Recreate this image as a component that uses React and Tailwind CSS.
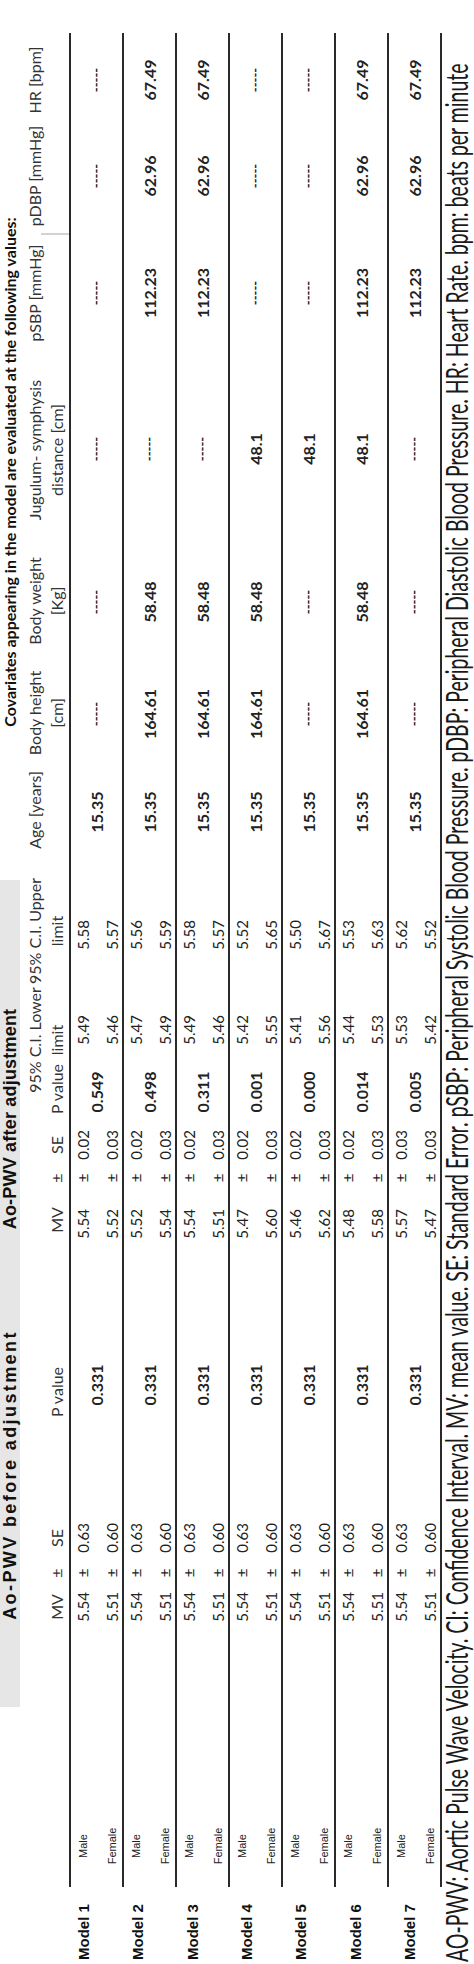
const rows = [
  { n: "1", lab: "pt-[5px]", mv: ["5.54", "5.52"], se: ["0.02", "0.03"], p: "0.549", lo: ["5.49", "5.46"], up: ["5.58", "5.57"], cov: ["15.35", "-----", "-----", "-----", "-----", "-----", "-----"] },
  { n: "2", lab: "pt-[6px]", mv: ["5.52", "5.54"], se: ["0.02", "0.03"], p: "0.498", lo: ["5.47", "5.49"], up: ["5.56", "5.59"], cov: ["15.35", "164.61", "58.48", "-----", "112.23", "62.96", "67.49"] },
  { n: "3", lab: "pt-[8px]", mv: ["5.54", "5.51"], se: ["0.02", "0.03"], p: "0.311", lo: ["5.49", "5.46"], up: ["5.58", "5.57"], cov: ["15.35", "164.61", "58.48", "-----", "112.23", "62.96", "67.49"] },
  { n: "4", lab: "pt-[9px]", mv: ["5.47", "5.60"], se: ["0.02", "0.03"], p: "0.001", lo: ["5.42", "5.55"], up: ["5.52", "5.65"], cov: ["15.35", "164.61", "58.48", "48.1", "-----", "-----", "-----"] },
  { n: "5", lab: "pt-[10px]", mv: ["5.46", "5.62"], se: ["0.02", "0.03"], p: "0.000", lo: ["5.41", "5.56"], up: ["5.50", "5.67"], cov: ["15.35", "-----", "-----", "48.1", "-----", "-----", "-----"] },
  { n: "6", lab: "pt-[12px]", mv: ["5.48", "5.58"], se: ["0.02", "0.03"], p: "0.014", lo: ["5.44", "5.53"], up: ["5.53", "5.63"], cov: ["15.35", "164.61", "58.48", "48.1", "112.23", "62.96", "67.49"] },
  { n: "7", lab: "pt-[13px]", mv: ["5.57", "5.47"], se: ["0.03", "0.03"], p: "0.005", lo: ["5.53", "5.42"], up: ["5.62", "5.52"], cov: ["15.35", "-----", "-----", "-----", "112.23", "62.96", "67.49"] },
];

// gaps between covariate column centres
const covMl = ["ml-[123px]", "ml-[98px]", "ml-[112px]", "ml-[153px]", "ml-[156px]", "ml-[117px]", "ml-[96px]"];

const Pair = ({ ml, a, b, cls = "" }) => (
  <div className={`${ml} w-0 shrink-0 flex flex-col items-center ${cls}`}>
    <span className="mt-[2px] h-[20px] leading-[20px] whitespace-nowrap">{a}</span>
    <span className="mt-[9px] h-[20px] leading-[20px] whitespace-nowrap">{b}</span>
  </div>
);

const Mid = ({ ml, children, cls = "" }) => (
  <div className={`${ml} w-0 shrink-0 flex items-center justify-center whitespace-nowrap ${cls}`}>
    {children}
  </div>
);

const Head = ({ ml, l1 = "", l2 = "" }) => (
  <div className={`${ml} w-0 shrink-0 flex flex-col items-center`}>
    <span className="h-[22px] leading-[22px] whitespace-nowrap">{l1}</span>
    <span className="h-[22px] leading-[22px] whitespace-nowrap">{l2}</span>
  </div>
);

const Line = () => <div className="ml-[77px] w-[1854px] h-[2px] bg-[#2a2a2a]" />;

const Cov = ({ ml, v }) =>
  v === "-----" ? (
    <Mid ml={ml} cls="font-bold text-[13px]">-----</Mid>
  ) : (
    <Mid ml={ml} cls="font-bold text-[16px]">{v}</Mid>
  );

const ModelRow = ({ r }) => (
  <>
    <div className="flex h-[51px] font-['Lato',sans-serif] text-[15px]">
      <div className={`w-[77px] shrink-0 pl-[4px] ${r.lab} font-['Liberation_Sans',Arial,sans-serif] font-bold text-[15px] leading-[16px] whitespace-nowrap text-[#111]`}>
        Model {r.n}
      </div>
      <Pair ml="ml-[41px]" a="Male" b="Female" cls="font-['Liberation_Sans',Arial,sans-serif] text-[11px]" />
      <Pair ml="ml-[239px]" a="5.54" b="5.51" />
      <Pair ml="ml-[34px]" a="±" b="±" />
      <Pair ml="ml-[35px]" a="0.63" b="0.60" />
      <Mid ml="ml-[153px]" cls="font-bold text-[16px]">0.331</Mid>
      <Pair ml="ml-[161px]" a={r.mv[0]} b={r.mv[1]} />
      <Pair ml="ml-[46px]" a="±" b="±" />
      <Pair ml="ml-[33px]" a={r.se[0]} b={r.se[1]} />
      <Mid ml="ml-[53px]" cls="font-bold text-[16px]">{r.p}</Mid>
      <Pair ml="ml-[62px]" a={r.lo[0]} b={r.lo[1]} />
      <Pair ml="ml-[95px]" a={r.up[0]} b={r.up[1]} />
      {r.cov.map((v, i) => (
        <Cov key={i} ml={covMl[i]} v={v} />
      ))}
    </div>
    <Line />
  </>
);

export default function App() {
  return (
    <div className="w-[474px] h-[1964px] overflow-hidden bg-white">
      <div className="w-[1964px] h-[474px] origin-top-left -rotate-90 translate-y-[1964px] bg-white text-[#222]">
        {/* group headers */}
        <div className="flex h-[20px]">
          <div className="w-[257px] shrink-0" />
          <div className="w-[370px] shrink-0 flex bg-[#e6e6e6]">
            <div className="relative z-10 ml-[232px] w-0 flex items-center justify-center whitespace-nowrap font-['Liberation_Sans',Arial,sans-serif] font-bold text-[18px] tracking-[2.4px] text-[#111]">
              Ao-PWV before adjustment
            </div>
          </div>
          <div className="w-[457px] shrink-0 flex bg-[#e6e6e6]">
            <div className="ml-[218px] w-0 flex items-center justify-center whitespace-nowrap font-['Liberation_Sans',Arial,sans-serif] font-bold text-[18px] tracking-[0.2px] text-[#111]">
              Ao-PWV after adjustment
            </div>
          </div>
          <div className="ml-[408px] w-0 flex items-center justify-center whitespace-nowrap font-['Lato',sans-serif] font-bold text-[16px] text-[#111]">
            Covariates appearing in the model are evaluated at the following values:
          </div>
        </div>

        {/* column headers */}
        <div className="flex h-[49px] pt-[4px] font-['Lato',sans-serif] text-[16px] text-[#333]">
          <Head ml="ml-[357px]" l2="MV" />
          <Head ml="ml-[34px]" l2="±" />
          <Head ml="ml-[35px]" l2="SE" />
          <Head ml="ml-[146px]" l2="P value" />
          <Head ml="ml-[172px]" l2="MV" />
          <Head ml="ml-[42px]" l2="±" />
          <Head ml="ml-[33px]" l2="SE" />
          <Head ml="ml-[56px]" l2="P value" />
          <Head ml="ml-[49px]" l1="95% C.I. Lower" l2="limit" />
          <Head ml="ml-[109px]" l1="95% C.I. Upper" l2="limit" />
          <Head ml="ml-[121px]" l1="Age [years]" />
          <Head ml="ml-[97px]" l1="Body height" l2="[cm]" />
          <Head ml="ml-[112px]" l1="Body weight" l2="[Kg]" />
          <Head ml="ml-[151px]" l1="Jugulum- symphysis" l2="distance [cm]" />
          <Head ml="ml-[157px]" l1="pSBP [mmHg]" />
          <div className="ml-[58px] w-[2px] shrink-0 self-end h-[28px] bg-[#d2d2d2]" />
          <Head ml="ml-[57px]" l1="pDBP [mmHg]" />
          <Head ml="ml-[96px]" l1="HR [bpm]" />
        </div>
        <Line />

        {rows.map((r) => (
          <ModelRow key={r.n} r={r} />
        ))}

        {/* caption */}
        <div className="h-[28px] pl-[2px] whitespace-nowrap">
          <span className="inline-block origin-left scale-x-[0.65] font-['Lato',sans-serif] text-[30px] leading-[28px] text-[#1a1a1a]">
            AO-PWV: Aortic Pulse Wave Velocity. CI: Confidence Interval. MV: mean value. SE: Standard Error. pSBP: Peripheral Systolic Blood Pressure. pDBP: Peripheral Diastolic Blood Pressure. HR: Heart Rate. bpm: beats per minute
          </span>
        </div>
      </div>
    </div>
  );
}
